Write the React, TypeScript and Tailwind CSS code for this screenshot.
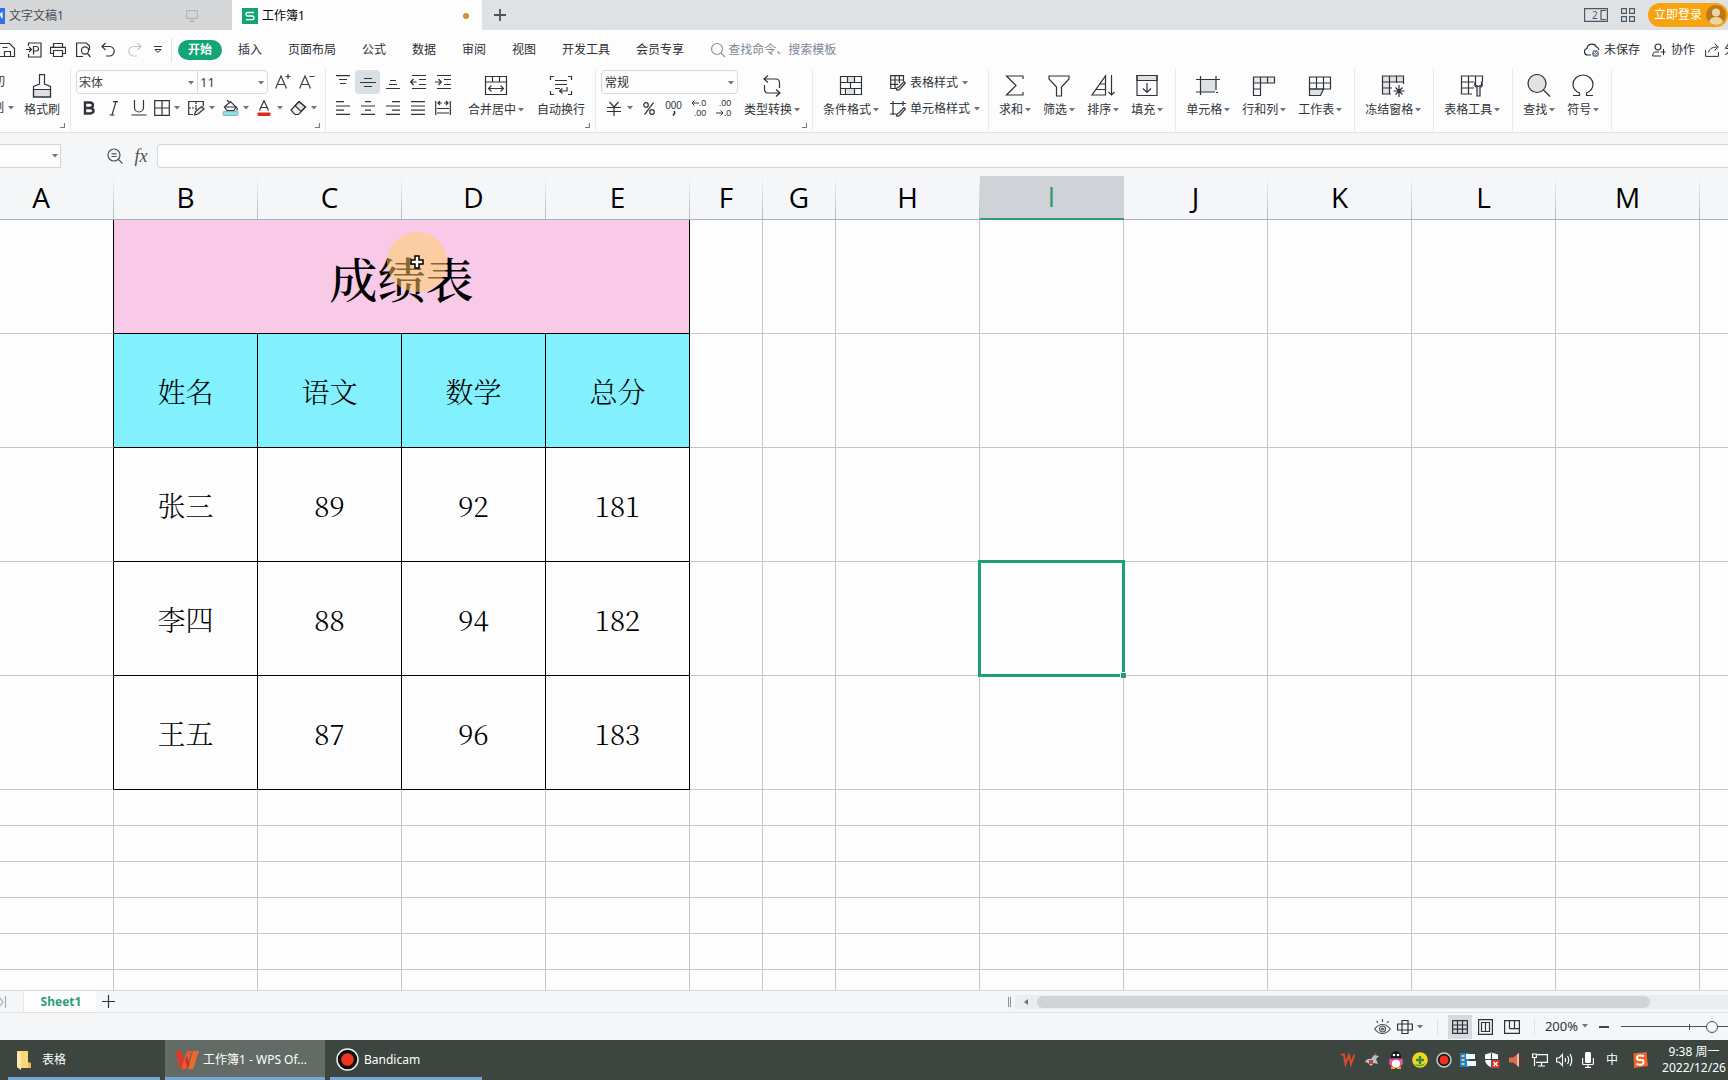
import type { ReactNode } from "react";
import clsx from "clsx";

const MENU = ["插入", "页面布局", "公式", "数据", "审阅", "视图", "开发工具", "会员专享"];

const COLUMNS = [
  { name: "A", width: "w-[114px]", label: "pr-8" },
  { name: "B", width: "w-36" },
  { name: "C", width: "w-36" },
  { name: "D", width: "w-36" },
  { name: "E", width: "w-36" },
  { name: "F", width: "w-[73px]" },
  { name: "G", width: "w-[73px]" },
  { name: "H", width: "w-36" },
  { name: "I", width: "w-36" },
  { name: "J", width: "w-36" },
  { name: "K", width: "w-36" },
  { name: "L", width: "w-36" },
  { name: "M", width: "w-36" },
  { name: "", width: "" },
];

const SUBJECTS = ["姓名", "语文", "数学", "总分"];

const SCORES = [
  ["张三", "89", "92", "181"],
  ["李四", "88", "94", "182"],
  ["王五", "87", "96", "183"],
];

const TAIL = ["F", "G", "H", "I", "J", "K", "L", "M", "N"];

function Svg({ w = 16, h = w, className, children }: { w?: number; h?: number; className?: string; children: ReactNode }) {
  return (
    <svg
      width={w}
      height={h}
      viewBox={`0 0 ${w} ${h}`}
      fill="none"
      stroke="currentColor"
      strokeWidth="1.2"
      className={clsx("shrink-0", className)}
      aria-hidden="true"
    >
      {children}
    </svg>
  );
}

function Caret() {
  return (
    <Svg w={6} h={4} className="text-[#70757b]">
      <path d="M0 0h6L3 3.6z" fill="currentColor" stroke="none" />
    </Svg>
  );
}

function Corner() {
  return (
    <Svg w={5} className="absolute right-[5px] bottom-1 text-[#777c82]">
      <path d="M4.5 0v4.5H0" />
    </Svg>
  );
}

function Group({ className, corner, children }: { className?: string; corner?: boolean; children: ReactNode }) {
  return (
    <div className={clsx("relative flex shrink-0 border-r border-[#e9ebee]", className)}>
      {children}
      {corner && <Corner />}
    </div>
  );
}

function BigButton({ label, caret = true, children }: { label: string; caret?: boolean; children: ReactNode }) {
  return (
    <button type="button" className="flex shrink-0 flex-col items-center pt-1">
      <span className="flex h-7 items-center">
        <Svg w={24}>{children}</Svg>
      </span>
      <span className="flex h-5 items-center gap-0.5 whitespace-nowrap">
        {label}
        {caret && <Caret />}
      </span>
    </button>
  );
}

function Cell({ label, active, children }: { label: string; active?: boolean; children: ReactNode }) {
  return (
    <button
      type="button"
      aria-label={label}
      className={clsx("flex h-6 w-[25px] items-center justify-center", active && "rounded-sm bg-[#d9e0e3]")}
    >
      {children}
    </button>
  );
}

function SplitButton({ label, children }: { label: string; children: ReactNode }) {
  return (
    <button type="button" aria-label={label} className="flex h-6 w-[34px] items-center gap-1">
      {children}
      <Caret />
    </button>
  );
}

function TitleBar() {
  return (
    <div className="flex h-[30px] shrink-0 bg-[#dfe2e4]">
      <div className="flex w-58 items-center bg-[#d5d7d9] pt-0.5 text-[#4a4f55]">
        <Svg w={5} h={16} className="text-white">
          <path d="M0 0h5v16H0z" fill="#2f72e8" stroke="none" />
          <path d="M0 5l2 5V4" />
        </Svg>
        <span className="ml-1">文字文稿1</span>
        <Svg w={12} className="mr-[34px] ml-auto text-[#b4b7ba]">
          <path d="M.6.6h10.800v7.800H.6zM6 8.400v3M3 11.400h6" />
        </Svg>
      </div>
      <div className="flex w-[250px] items-center bg-[#fdfdfd] pt-0.5 pl-2.5 text-black">
        <Svg w={16}>
          <path d="M0 0h16v16H0z" fill="#11a573" stroke="none" />
          <path d="M12 4.500H5.500Q4 4.500 4 6.200T5.500 8h5q1.500 0 1.500 1.800t-1.500 1.800H4" stroke="#fff" strokeWidth="1.4" />
        </Svg>
        <span className="ml-1">工作簿1</span>
        <span className="mr-[13px] ml-auto size-1.5 rounded-full bg-[#d2952c]" />
      </div>
      <button type="button" aria-label="新建" className="ml-3 text-[#4a5262]">
        <Svg w={12}>
          <path d="M6 0v12M0 6h12" strokeWidth="1.8" />
        </Svg>
      </button>
      <div className="ml-auto flex items-center gap-[13px] text-[#4d5866]">
        <button type="button" aria-label="窗口">
          <Svg w={24} h={14}>
            <path d="M.6.6h22.800v12.800H.6zM22 2.500h-5v9h5" />
            <text x="8" y="11" fontSize="10" fill="currentColor" stroke="none">
              2
            </text>
          </Svg>
        </button>
        <button type="button" aria-label="应用">
          <Svg w={14}>
            <path d="M.6.6h4.800v4.800H.6zM8.600.6h4.800v4.800H8.600zM.6 8.600h4.800v4.800H.6zM8.600 8.600h4.800v4.800H8.600z" />
          </Svg>
        </button>
        <button type="button" className="flex h-6 items-center gap-1 rounded-full bg-[#f6a30f] pr-0.5 pl-1.5 text-white">
          立即登录
          <Svg w={20}>
            <circle cx="10" cy="10" r="10" fill="#b9791b" stroke="none" />
            <circle cx="10" cy="7.500" r="4" fill="#f0d3a4" stroke="none" />
            <path d="M3 17q1.500-5 7-5t7 5q-3 3-7 3t-7-3z" fill="#f0d3a4" stroke="none" />
          </Svg>
        </button>
      </div>
    </div>
  );
}

function QuickTools() {
  return (
    <div className="flex items-center text-[#2f343a]">
      <button type="button" aria-label="保存">
        <Svg w={16}>
          <path d="M0 1.500h9.500l5 5v8H0M4.500 14.500v-5h6v5M2.500 5.500h5" />
        </Svg>
      </button>
      <button type="button" aria-label="输出为PDF" className="ml-2.5">
        <Svg w={16}>
          <path d="M2.500 4V1h12.500v14H2.500v-3M0 7.500h5M3 5l2.500 2.500L3 10M7.500 12.500V4.500h3q2 .2 2 2.300t-2 2.200h-3" />
        </Svg>
      </button>
      <button type="button" aria-label="打印" className="ml-2">
        <Svg w={16}>
          <path d="M3.500 5V1.500h9V5M3.500 11.500h-3V5.300h15v6.200h-3M3.500 8.500h9v6h-9z" />
        </Svg>
      </button>
      <button type="button" aria-label="打印预览" className="ml-2.5">
        <Svg w={16}>
          <path d="M7 14.500H.6V1h9.900l3 3v4" />
          <circle cx="9" cy="8.500" r="3.600" />
          <path d="M11.500 11.500l3 3.500" />
        </Svg>
      </button>
      <button type="button" aria-label="撤销" className="ml-[9px]">
        <Svg w={15} h={16}>
          <path d="M4.500 1L1 4.500 4.500 8M1 4.500h7.500a4.700 4.700 0 010 9.500H5" />
        </Svg>
      </button>
      <button type="button" aria-label="恢复" className="ml-[11px] text-[#c3c6c9]">
        <Svg w={15} h={16}>
          <path d="M10.500 1L14 4.500 10.500 8M14 4.500H6.500a4.700 4.700 0 000 9.500H10" />
        </Svg>
      </button>
      <button type="button" aria-label="更多" className="ml-3">
        <Svg w={8} h={10}>
          <path d="M0 1.500h8M1 4.500l3 3 3-3z" strokeWidth="1" />
        </Svg>
      </button>
    </div>
  );
}

function MenuBar() {
  return (
    <div className="flex h-[38px] shrink-0 items-center pt-0.5">
      <QuickTools />
      <span className="ml-[9px] h-6 w-px bg-[#e2e4e7]" />
      <button type="button" className="ml-1.5 h-5 w-11 rounded-full bg-[#14a577] font-bold text-white">
        开始
      </button>
      <nav className="ml-4 flex gap-[26px] whitespace-nowrap">
        {MENU.map((item) => (
          <a key={item} href="#">
            {item}
          </a>
        ))}
      </nav>
      <label className="ml-[26px] flex items-center gap-0.5 text-[#8b94a0]">
        <Svg w={16}>
          <circle cx="7" cy="7" r="5.500" />
          <path d="M11 11l4 4" />
        </Svg>
        <input
          aria-label="搜索"
          placeholder="查找命令、搜索模板"
          className="w-32 bg-transparent outline-none placeholder:text-[#7c8896]"
        />
      </label>
      <div className="-mr-5 ml-auto flex items-center whitespace-nowrap">
        <button type="button" className="flex items-center gap-1">
          <Svg w={16}>
            <path d="M7 13H4A3.300 3.300 0 013 6.500 5 5 0 0112.500 5 3.500 3.500 0 0115 8" />
            <circle cx="11.500" cy="11.500" r="3.500" fill="#7887a0" stroke="none" />
            <path d="M10 10l3 3m0-3l-3 3" stroke="#fff" strokeWidth=".8" />
          </Svg>
          未保存
        </button>
        <button type="button" className="ml-3 flex items-center gap-[5px]">
          <Svg w={14}>
            <circle cx="6" cy="4" r="3" />
            <path d="M7 9H3Q.6 9.500.6 13H9M11.500 6v6M8.500 9h5" strokeWidth="1" />
          </Svg>
          协作
        </button>
        <button type="button" className="ml-2.5 flex items-center gap-1">
          <Svg w={15} h={14}>
            <path d="M.6 7v6.400h12.800V9M3.500 9.500Q4.500 4 12 4M9.500.6L13.300 4 9.500 7.500" strokeWidth="1" />
          </Svg>
          分享
        </button>
      </div>
    </div>
  );
}

function FontGroup() {
  return (
    <Group corner className="flex-col gap-0.5 pt-0.5 pl-[5px]">
      <div className="flex h-6 items-center text-[#3a3f45]">
        <div className="flex h-6 w-48 rounded-sm border border-[#d6d9dc]">
          <label className="flex flex-1 items-center border-r border-[#d6d9dc] pt-0.5 pr-[3px] pl-0.5">
            <select aria-label="字体" className="flex-1 appearance-none outline-none">
              <option>宋体</option>
            </select>
            <Caret />
          </label>
          <label className="flex w-[69px] items-center pt-0.5 pr-[3px] pl-0.5">
            <select aria-label="字号" className="flex-1 appearance-none text-[13px] outline-none">
              <option>11</option>
            </select>
            <Caret />
          </label>
        </div>
        <button type="button" aria-label="增大字号" className="ml-[7px]">
          <Svg w={16}>
            <path d="M.6 14.500L6 2l5.500 12.500M2.500 10.500h7M13 0v5M10.500 2.500h5" />
          </Svg>
        </button>
        <button type="button" aria-label="减小字号" className="ml-2">
          <Svg w={16}>
            <path d="M.6 14.500L6 2l5.500 12.500M2.500 10.500h7M10.500 2.500h5" />
          </Svg>
        </button>
      </div>
      <div className="flex h-6">
        <Cell label="加粗">
          <Svg w={12} h={14}>
            <path d="M2 1.500h4.500Q10 1.700 10 4.200T6.500 7H2zM2 7h5q3.500.2 3.500 2.800T7 12.500H2z" strokeWidth="2.400" />
          </Svg>
        </Cell>
        <Cell label="倾斜">
          <Svg w={10} h={15}>
            <path d="M4 .6h5M.6 14h5M7 .6L3 14" />
          </Svg>
        </Cell>
        <Cell label="下划线">
          <Svg w={16}>
            <path d="M3.500 0v7.500a4.500 4.500 0 009 0V0M.5 15h15" />
          </Svg>
        </Cell>
        <div className="ml-[3px] flex pr-px">
          <SplitButton label="边框">
            <Svg w={16}>
              <path d="M.7.7h14.600v14.600H.7zM8 .7v14.600M.7 8h14.600" />
            </Svg>
          </SplitButton>
          <SplitButton label="绘图边框">
            <Svg w={17} h={16}>
              <path d="M5 14.500H.7V1.500h14.600v5" />
              <path d="M8 2v8M1 8h9" strokeDasharray="2 1" />
              <path d="M6.500 15l1-3.500 6-5 2.500 2.500-6 5z" fill="#e4e6e8" />
            </Svg>
          </SplitButton>
          <SplitButton label="填充颜色">
            <Svg w={17} h={16}>
              <path d="M2.500 7l6-5.500 5.500 5.500-2 3.500h-7z" />
              <path d="M2.500 7h11.500M5 0l3 3M14 7q2.500 2 .5 3.500" />
              <rect x="1" y="11.500" width="15" height="4" rx="1" fill="#8ee0e6" stroke="#6aaeb4" strokeWidth=".8" />
            </Svg>
          </SplitButton>
          <SplitButton label="字体颜色">
            <Svg w={17} h={16}>
              <path d="M3.500 10.500L8 .6l4.500 9.900M5 7.500h6" />
              <rect x="1.500" y="12.500" width="13" height="3.500" rx="1" fill="#d92a1c" stroke="none" />
            </Svg>
          </SplitButton>
          <SplitButton label="清除">
            <Svg w={17} h={16}>
              <path d="M5 5.800L9 1.500l6.500 5.500-4.500 4.500z" fill="#dfe1e3" />
              <path d="M1 10l8-8.500 6.500 5.500L8.500 14.500H5z" />
            </Svg>
          </SplitButton>
        </div>
      </div>
    </Group>
  );
}

function AlignGroup() {
  return (
    <Group corner className="gap-[13px] pr-2.5 pl-1">
      <div className="grid grid-cols-5 content-start gap-y-0.5 pt-0.5">
        <Cell label="顶端对齐">
          <Svg w={14}>
            <path d="M0 0.700h14M3 4.500h8M4 8.500h6" />
          </Svg>
        </Cell>
        <Cell label="垂直居中" active>
          <Svg w={16}>
            <path d="M4 4.500h8M0 8.500h16M4 12.500h8" />
          </Svg>
        </Cell>
        <Cell label="底端对齐">
          <Svg w={14} h={16}>
            <path d="M4 6.500h6M3 10.500h8M0 14.500h14" />
          </Svg>
        </Cell>
        <Cell label="减少缩进">
          <Svg w={16}>
            <path d="M2 1.500h14M9 5.500h7M9 10.500h7M2 14.500h14M.7 8h6M3.500 5L.7 8l2.800 3" />
          </Svg>
        </Cell>
        <Cell label="增加缩进">
          <Svg w={16}>
            <path d="M2 1.500h14M9 5.500h7M9 10.500h7M2 14.500h14M0 8h6M3.500 5l2.800 3-2.800 3" />
          </Svg>
        </Cell>
        <Cell label="左对齐">
          <Svg w={14}>
            <path d="M0 .7h8M0 5h14M0 9.200h8M0 13.400h14" />
          </Svg>
        </Cell>
        <Cell label="水平居中">
          <Svg w={14}>
            <path d="M4 .7h6M0 5h14M4 9.200h6M0 13.400h14" />
          </Svg>
        </Cell>
        <Cell label="右对齐">
          <Svg w={14}>
            <path d="M6 .7h8M0 5h14M6 9.200h8M0 13.400h14" />
          </Svg>
        </Cell>
        <Cell label="两端对齐">
          <Svg w={14}>
            <path d="M0 .7h14M0 5h14M0 9.200h14M0 13.400h14" />
          </Svg>
        </Cell>
        <Cell label="分散对齐">
          <Svg w={16}>
            <path d="M.7 1v14M15.300 1v14M3 3h4M9 3h4M5 1L3 3l2 2M11 1l2 2-2 2M2 8.500h12M2 13h12" />
          </Svg>
        </Cell>
      </div>
      <BigButton label="合并居中">
        <path d="M1.500 2.500h21v18h-21zM1.500 8h21M8.500 2.500V8M15.500 2.500V8M4.500 14.500h15M7.500 11.500l-3 3 3 3M16.500 11.500l3 3-3 3" />
      </BigButton>
      <BigButton label="自动换行" caret={false}>
        <path d="M5 2.500H1.500V6M19 2.500h3.500V6M5 20.500H1.500V17M19 20.500h3.500V17M6 6.500h12M6 10.500h12M6 14.500h5M18 13v4h-7M13.500 14.500L10.500 17l3 2.500" />
      </BigButton>
    </Group>
  );
}

const DIGITS = "flex flex-col items-end font-['Liberation_Sans',sans-serif] text-[9px] leading-[10px]";

function NumberGroup() {
  return (
    <Group corner className="gap-1.5 pr-3 pl-[5px]">
      <div className="flex flex-col gap-0.5 pt-0.5">
        <label className="flex h-6 w-[137px] items-center rounded-sm border border-[#d6d9dc] pt-0.5 pr-[3px] pl-[3px]">
          <select aria-label="数字格式" className="flex-1 appearance-none outline-none">
            <option>常规</option>
          </select>
          <Caret />
        </label>
        <div className="flex h-6">
          <button type="button" aria-label="货币" className="flex w-[35px] items-center gap-1.5 pl-1.5">
            <Svg w={14} h={15}>
              <path d="M2.500 1L7 6l4.500-5M7 6v9M0 6.500h14M0 10.500h14" />
            </Svg>
            <Caret />
          </button>
          <Cell label="百分比">
            <Svg w={12} h={13}>
              <circle cx="3" cy="3" r="2.300" />
              <circle cx="9" cy="10" r="2.300" />
              <path d="M10.500.6l-9 12" />
            </Svg>
          </Cell>
          <Cell label="千位分隔">
            <span className="flex flex-col items-center font-['Liberation_Sans',sans-serif] text-[10px] leading-[10px]">
              000
              <Svg w={4} h={5}>
                <path d="M2.500 0v2.500L1 4.500" strokeWidth="1.600" />
              </Svg>
            </span>
          </Cell>
          <Cell label="增加小数位">
            <span className={DIGITS}>
              <span className="flex items-center">
                <Svg w={8} h={6}>
                  <path d="M1 3h7M3.500.5L1 3l2.500 2.500" strokeWidth="1" />
                </Svg>
                .0
              </span>
              <span>.00</span>
            </span>
          </Cell>
          <Cell label="减少小数位">
            <span className={DIGITS}>
              <span>.00</span>
              <span className="flex items-center">
                <Svg w={8} h={6}>
                  <path d="M0 3h7M4.500.5L7 3 4.500 5.500" strokeWidth="1" />
                </Svg>
                .0
              </span>
            </span>
          </Cell>
        </div>
      </div>
      <BigButton label="类型转换">
        <path d="M8 1.500L4 5l4 3.500M4 5h12q3.500 0 3.500 4v5M16 15.500l4 3.500-4 3.500M20 19H8q-3.500 0-3.500-4v-4" />
      </BigButton>
    </Group>
  );
}

function Ribbon() {
  return (
    <div className="flex h-[65px] shrink-0 border-b border-[#dfe1e4] text-[#2f343a]">
      <Group corner className="gap-2.5 pr-2.5">
        <div className="flex w-3.5 flex-col gap-0.5 pt-0.5">
          <button type="button" aria-label="剪切" className="flex h-6 w-[5px] items-center justify-end overflow-hidden">
            切
          </button>
          <button type="button" aria-label="复制" className="flex h-6 items-center gap-1">
            <span className="flex w-[5px] justify-end overflow-hidden">制</span>
            <Caret />
          </button>
        </div>
        <BigButton label="格式刷" caret={false}>
          <path d="M3.500 15.500h17V23h-17z" fill="#dfe1e5" />
          <path d="M9.500.6h5v9.400l6 2.500V23h-17V12.500l6-2.500z" />
        </BigButton>
      </Group>
      <FontGroup />
      <AlignGroup />
      <NumberGroup />
      <Group className="gap-[11px] pr-2 pl-2.5">
        <BigButton label="条件格式">
          <path d="M8 2.500h7v6H8zM8 14.500h7v6H8z" fill="#dfe1e5" stroke="none" />
          <path d="M1.500 2.500h21v18h-21zM1.500 8.500h21M1.500 14.500h21M8.500 2.500v6M15.500 2.500v6M11.500 8.500v6M6.500 14.500v6M15.500 14.500v6" />
        </BigButton>
        <div className="flex flex-col gap-0.5 pt-0.5 whitespace-nowrap">
          <button type="button" className="flex h-6 items-center gap-1 pt-0.5">
            <Svg w={16}>
              <path d="M6 13.500H.7V.7h12.800V6M.7 5h12.800M.7 9.300H8M5 .7v12.800M9.300.7V8" />
              <path d="M6.500 15q0-3 2.500-3l5-5.500 1.500 1.500-5 5.500q-1 2-4 1.500z" fill="#e4e6e8" />
            </Svg>
            <span>表格样式</span>
            <Caret />
          </button>
          <button type="button" className="flex h-6 items-center gap-1 pt-0.5">
            <Svg w={16}>
              <path d="M3 0v14M0 2.500h16M13 0v5M0 13h6" />
              <path d="M6.500 15q0-3 2.500-3l5-5.500 1.500 1.500-5 5.500q-1 2-4 1.500z" fill="#e4e6e8" />
            </Svg>
            <span>单元格样式</span>
            <Caret />
          </button>
        </div>
      </Group>
      <Group className="gap-3 pr-3 pl-2.5">
        <BigButton label="求和">
          <path d="M20 5V2H3.500l9.500 9.500L3.500 21H20v-3" />
        </BigButton>
        <BigButton label="筛选">
          <path d="M2 2h20v3l-7.500 8v9h-5v-9L2 5z" />
        </BigButton>
        <BigButton label="排序">
          <path d="M14.500 21V2L1 21zM14.500 15.500H5M14.500 10H9M20.500 1v20M17.500 18l3 3 3-3" />
        </BigButton>
        <BigButton label="填充">
          <path d="M2 1.500h20v5H2z" fill="#dfe1e5" />
          <path d="M2 1.500h20v20H2zM12 9v9M8 14.500l4 4 4-4" />
        </BigButton>
      </Group>
      <Group className="gap-3 pr-3 pl-2.5">
        <BigButton label="单元格">
          <path d="M4.500 5h15v13h-15z" fill="#dfe1e5" stroke="none" />
          <path d="M4.500 2v19M0 5.500h24M0 18h19M20 2v14M20 18.500h2" />
        </BigButton>
        <BigButton label="行和列">
          <path d="M1.500 3h21v6h-21z" fill="#e6e8ea" stroke="none" />
          <path d="M1.500 3h21v6h-14v12.500h-7zM8.500 3v6M15.500 3v6M1.500 9h7M1.500 15h7" />
        </BigButton>
        <BigButton label="工作表">
          <path d="M1.500 15h14l-3 6.500h-11z" fill="#dfe1e5" />
          <path d="M1.500 3h21v12h-21zM1.500 9h21M8.500 3v12M15.500 3v12" />
        </BigButton>
      </Group>
      <Group className="pr-3 pl-2.5">
        <BigButton label="冻结窗格">
          <path d="M1.500 2h21v6h-21zM1.500 8h7v12h-7z" fill="#e1e3e5" stroke="none" />
          <path d="M10 20H1.500V2h21v8M1.500 8h21M1.500 14H11M8.500 2v18M15.500 2v7M18 11v12M12.500 17h11M14.500 13.500l7 7M21.500 13.500l-7 7" />
        </BigButton>
      </Group>
      <Group className="pr-3 pl-2.5">
        <BigButton label="表格工具">
          <path d="M12 20H1.500V2h21v6M1.500 8H14M1.500 14H14M8.500 2v18M15.500 2v6" />
          <path d="M15.500 7.500Q13.500 12 17 13.500V22h3v-8.500q3.500-1.500 1.500-6v4h-1.500l-1 1h-1l-1-1h-1.500z" fill="#e6e8ea" />
        </BigButton>
      </Group>
      <Group className="gap-3 pr-3 pl-2.5">
        <BigButton label="查找">
          <circle cx="10" cy="9.500" r="9" fill="#e0e2e4" />
          <path d="M16.500 16L23 22.500" />
        </BigButton>
        <BigButton label="符号">
          <path d="M2 21.500h6.500v-2.500Q2 16 2 10.500a10 9.500 0 0120 0Q22 16 15.500 19v2.500H22" />
        </BigButton>
      </Group>
    </div>
  );
}

function FormulaBar() {
  return (
    <div className="flex h-[43px] shrink-0 items-center bg-[#f4f6f8] pt-0.5 text-[#4c5157]">
      <label className="flex h-6 w-[61px] items-center border border-l-0 border-[#d3d7db] bg-[#fdfdfd] pr-0.5">
        <input aria-label="名称框" className="min-w-0 flex-1 bg-transparent outline-none" />
        <Caret />
      </label>
      <button type="button" aria-label="浏览公式结果" className="ml-[46px]">
        <Svg w={16}>
          <circle cx="7" cy="7" r="6" />
          <path d="M11.500 11.500l4 4M4.500 5.800h5M4.500 8.500h5" />
        </Svg>
      </button>
      <button
        type="button"
        aria-label="插入函数"
        className="ml-2.5 w-4 font-['Liberation_Serif',serif] text-lg leading-6 italic"
      >
        fx
      </button>
      <input
        aria-label="编辑栏"
        className="ml-2 h-6 min-w-0 flex-1 rounded-l-sm border border-r-0 border-[#d3d7db] bg-[#fdfdfd] px-1 outline-none"
      />
    </div>
  );
}

const LINE = "border-r border-b border-[#c3c7cc]";
const INK = "border-r border-b border-black";

function EmptyCells({ columns, selected }: { columns: string[]; selected?: string }) {
  return columns.map((name) => (
    <td key={name} className={clsx("relative p-0", name === "N" ? "border-b border-[#c3c7cc]" : LINE)}>
      {name === selected && (
        <span className="absolute -inset-0.5 z-10 border-3 border-[#1d9f76]">
          <span className="absolute -right-1 -bottom-1 size-1.5 border-t border-l border-white bg-[#1d9f76]" />
        </span>
      )}
    </td>
  ));
}

function Pointer() {
  return (
    <span className="absolute top-3 left-[273px] flex size-15 items-center justify-center rounded-full bg-[#ffd060]/50">
      <Svg w={14}>
        <path d="M5 1h4v4h4v4H9v4H5V9H1V5h4z" fill="#fff" stroke="#000" strokeWidth="1.500" />
      </Svg>
    </span>
  );
}

function Sheet() {
  return (
    <div className="min-h-0 flex-1 overflow-hidden bg-[#fdfdfd]">
      <table className="w-full table-fixed border-separate border-spacing-0 font-['Noto_Serif_CJK_SC','Noto_Sans_CJK_SC',serif] text-black">
        <colgroup>
          {COLUMNS.map((col) => (
            <col key={col.name} className={col.width} />
          ))}
        </colgroup>
        <thead>
          <tr className="h-11 font-['Open_Sans',sans-serif] text-[28px] leading-9">
            {COLUMNS.map((col) => (
              <th
                key={col.name}
                scope="col"
                className={clsx(
                  "border-b pt-0 pb-0.5 pl-0 font-normal",
                  col.label ?? "pr-px",
                  col.name === "I"
                    ? "border-b-2 border-[#2f9c78] bg-[#cfd3d7] text-[#2f9c78]"
                    : "border-[#aab2bd] bg-[#f4f6f8]",
                  col.name !== "I" &&
                    col.name !== "" &&
                    "bg-[linear-gradient(to_bottom,#f4f6f8,#b3b9c2)] bg-[length:1px_100%] bg-right bg-no-repeat",
                )}
              >
                {col.name}
              </th>
            ))}
          </tr>
        </thead>
        <tbody className="text-center text-[28px] leading-9">
          <tr className="h-[114px]">
            <td className="border-r border-b border-r-black border-b-[#c3c7cc]" />
            <td colSpan={4} className={clsx("relative bg-[#f8cae7] px-0 pt-0.5 pb-0 text-5xl font-medium", INK)}>
              成绩表
              <Pointer />
            </td>
            <EmptyCells columns={TAIL} />
          </tr>
          <tr className="h-[114px]">
            <td className="border-r border-b border-r-black border-b-[#c3c7cc]" />
            {SUBJECTS.map((text) => (
              <td key={text} className={clsx("bg-[#83f0fd] p-0 font-light", INK)}>
                {text}
              </td>
            ))}
            <EmptyCells columns={TAIL} />
          </tr>
          {SCORES.map((row) => (
            <tr key={row[0]} className="h-[114px]">
              <td className="border-r border-b border-r-black border-b-[#c3c7cc]" />
              {row.map((text) => (
                <td key={text} className={clsx("p-0 font-light", INK)}>
                  {text}
                </td>
              ))}
              <EmptyCells columns={TAIL} selected={row[0] === "李四" ? "I" : undefined} />
            </tr>
          ))}
          {[6, 7, 8, 9, 10, 11].map((n) => (
            <tr key={n} className="h-9">
              <EmptyCells columns={["A", "B", "C", "D", "E", ...TAIL]} />
            </tr>
          ))}
        </tbody>
      </table>
    </div>
  );
}

function SheetTabs() {
  return (
    <div className="flex h-[22px] shrink-0 border-t border-[#d8dce0] bg-[#f4f6f8]">
      <button type="button" aria-label="最后一个工作表" className="w-6 border-r border-[#e3e6e9] text-[#a8acb1]">
        <Svg w={7} h={12}>
          <path d="M0 2l3 4-3 4M5.500 0v12" />
        </Svg>
      </button>
      <button type="button" className="w-18 bg-[#fdfdfd] pl-0.5 font-bold text-[#2f9c78]">
        Sheet1
      </button>
      <button type="button" aria-label="新建工作表" className="ml-1.5 text-[#2f343a]">
        <Svg w={13}>
          <path d="M6.500 0v13M0 6.500h13" />
        </Svg>
      </button>
      <div className="ml-auto flex w-5/12 items-center gap-1">
        <span className="h-2.5 w-[3px] border-x border-[#8a8f95]" />
        <div className="flex h-3.5 flex-1 items-center bg-[#e9edf0]">
          <button type="button" aria-label="向左滚动" className="flex w-[22px] justify-center">
            <Svg w={4} h={6} className="text-[#70757b]">
              <path d="M4 0v6L0 3z" fill="currentColor" stroke="none" />
            </Svg>
          </button>
          <span className="h-3 w-[86%] rounded-full bg-[#cfd4d9]" />
        </div>
      </div>
    </div>
  );
}

function StatusBar() {
  return (
    <div className="flex h-7 shrink-0 items-center justify-end border-t border-[#dfe2e5] bg-[#f4f6f8] text-[#2f343a]">
      <button type="button" aria-label="护眼模式">
        <Svg w={17} h={16} className="text-[#4d5359]">
          <path d="M.6 10Q4 5.500 8.500 5.500T16.400 10Q13 14.500 8.500 14.500T.6 10zM8.500 0v3M2.500 2l1.500 2M14.500 2L13 4" />
          <circle cx="8.500" cy="10" r="3" />
          <circle cx="8.500" cy="10" r="1" />
        </Svg>
      </button>
      <button type="button" aria-label="阅读模式" className="ml-1.5 flex items-center gap-1">
        <Svg w={16}>
          <path d="M5 1.500h6v13H5zM.6 5h14.800v6H.6zM5 5v6M11 5v6" />
        </Svg>
        <Caret />
      </button>
      <span className="ml-3.5 h-4 w-px bg-[#dfe2e5]" />
      <button type="button" aria-label="普通视图" className="ml-2.5 flex size-6 items-center justify-center bg-[#d6dade]">
        <Svg w={16} h={14}>
          <path d="M.6.6h14.800v12.800H.6zM.6 5h14.800M.6 9.200h14.800M5.500.6v12.800M10.500.6v12.800" />
        </Svg>
      </button>
      <button type="button" aria-label="分页预览" className="ml-1.5">
        <Svg w={15} h={16}>
          <path d="M.6.6h13.800v14.800H.6zM3.500 3.500h8v9h-8zM7.500 3.500v9" />
        </Svg>
      </button>
      <button type="button" aria-label="页面布局" className="ml-[11px]">
        <Svg w={16} h={14}>
          <path d="M.6.6h14.800v12.800H.6zM5.500.6v8M10.500.6v8M5.500 8.600h10" />
        </Svg>
      </button>
      <span className="ml-3.5 h-4 w-px bg-[#dfe2e5]" />
      <button type="button" className="ml-2.5 flex items-center gap-1 text-[13px]">
        200%
        <Caret />
      </button>
      <button type="button" aria-label="缩小" className="ml-[11px] h-0.5 w-2.5 bg-[#3f444a]" />
      <div className="relative ml-3 flex w-[107px] items-center">
        <input
          type="range"
          aria-label="显示比例"
          min={10}
          max={400}
          defaultValue={358}
          className="h-px w-full appearance-none bg-[#4d5359] [&::-webkit-slider-thumb]:size-3 [&::-webkit-slider-thumb]:appearance-none [&::-webkit-slider-thumb]:rounded-full [&::-webkit-slider-thumb]:border [&::-webkit-slider-thumb]:border-[#4d5359] [&::-webkit-slider-thumb]:bg-[#f4f6f8]"
        />
        <span className="absolute right-[38px] h-1.5 w-px bg-[#4d5359]" />
      </div>
    </div>
  );
}

function TaskButton({ label, className, children }: { label: string; className: string; children: ReactNode }) {
  return (
    <button
      type="button"
      className={clsx("flex items-center border-b-3 border-[#74a9d3] pt-0.5 whitespace-nowrap", className)}
    >
      {children}
      {label}
    </button>
  );
}

function Tray() {
  return (
    <div className="flex items-center">
      <span className="grid w-6 place-items-center">
        <Svg w={16} h={14} className="text-[#dd4a2b]">
          <path d="M1 1.500h3L5.500 11 9 2l2 9 3.500-9.500" strokeWidth="2" />
        </Svg>
      </span>
      <span className="grid w-6 place-items-center">
        <Svg w={16}>
          <path d="M1 10q2-4 6-3l3-4 5 1-3 3 2 5-4-1-3 3-3-3z" fill="#b9bfc0" stroke="none" />
          <path d="M5 8h4v4H5z" fill="#c9403a" stroke="none" />
          <path d="M11 1l1 2" stroke="#c9403a" />
        </Svg>
      </span>
      <span className="grid w-6 place-items-center">
        <Svg w={16} h={18}>
          <ellipse cx="8" cy="11" rx="7" ry="6" fill="#e857a0" stroke="none" />
          <ellipse cx="8" cy="5.500" rx="5" ry="5" fill="#111" stroke="none" />
          <ellipse cx="8" cy="12.500" rx="4" ry="4" fill="#fff" stroke="none" />
          <circle cx="6" cy="4" r="1.300" fill="#fff" stroke="none" />
          <circle cx="10" cy="4" r="1.300" fill="#fff" stroke="none" />
          <path d="M4 8h8" stroke="#e857a0" strokeWidth="1.500" />
          <path d="M3 17h4M9 17h4" stroke="#f3a51c" strokeWidth="2" />
        </Svg>
      </span>
      <span className="grid w-6 place-items-center">
        <Svg w={16}>
          <circle cx="8" cy="8" r="7.800" fill="#f2d51e" stroke="none" />
          <path d="M2 12a7.800 7.800 0 0012-1Q8 14 2 12z" fill="#3ea53a" stroke="none" />
          <path d="M8 4v8M4 8h8" stroke="#2f8f37" strokeWidth="2.400" />
        </Svg>
      </span>
      <span className="grid w-6 place-items-center">
        <Svg w={16}>
          <circle cx="8" cy="8" r="7" fill="#1a1a1a" stroke="#c9cccc" strokeWidth="1.500" />
          <circle cx="8" cy="8" r="4.500" fill="#ee2f26" stroke="none" />
        </Svg>
      </span>
      <span className="grid w-6 place-items-center">
        <Svg w={16}>
          <path d="M0 1h9v14H0z" fill="#1d83dc" stroke="none" />
          <path d="M6 2h9v5H6zM7 9h9v5H7z" fill="#f1f6fa" stroke="none" />
          <path d="M1.500 4h3M1.500 8h3M1.500 12h3" stroke="#f4d13b" strokeWidth="2" />
        </Svg>
      </span>
      <span className="grid w-6 place-items-center">
        <Svg w={16}>
          <path d="M7.500.5l6.500 2v5q0 5-6.500 8-6.500-3-6.500-8v-5z" fill="#fff" stroke="none" />
          <path d="M7.500 1v14M1 7.500h13" stroke="#3c463f" />
          <path d="M7.500 8h8v8h-8z" fill="#d8352c" stroke="none" />
          <path d="M9.500 10l4 4m0-4l-4 4" stroke="#fff" strokeWidth="1.400" />
        </Svg>
      </span>
      <span className="grid w-6 place-items-center">
        <Svg w={16}>
          <path d="M1 5.500h4L11 1v14l-6-4.500H1z" fill="#dd6b4d" stroke="none" />
          <path d="M9 2.500l2-1.500v14l-2-1.500z" fill="#f0b7a2" stroke="none" />
          <path d="M13 4q2.500 4 0 8" stroke="#6b3a2c" />
        </Svg>
      </span>
      <span className="grid w-6 place-items-center">
        <Svg w={16} h={14}>
          <path d="M5 1.600h10.400v7.800H4M9.500 9.400v3M6 13h7M.6 1h3.800v3.500H.6zM2.500 4.500V13" />
        </Svg>
      </span>
      <span className="grid w-6 place-items-center">
        <Svg w={17} h={14}>
          <path d="M.6 5h2.500L6.500 1.500v11L3.100 9H.6zM9 5q1.200 2 0 4M11.500 3q2.500 4 0 8M14 1q3.500 6 0 12" />
        </Svg>
      </span>
      <span className="grid w-6 place-items-center">
        <Svg w={12} h={16}>
          <rect x="3" y="0" width="6" height="11" rx="1.500" fill="#fff" stroke="none" />
          <path d="M.6 6v5.500q0 1 1 1h8.800q1 0 1-1V6M6 12.500V15M3 15.400h6" />
        </Svg>
      </span>
      <span className="w-6 text-center">中</span>
      <span className="grid w-8 place-items-center">
        <Svg w={16}>
          <path d="M1.500 1.500l13-1.500 1.500 14-14 2z" fill="#f0672b" stroke="none" />
          <path d="M12 4Q5 2.500 5 5.500T8.500 8t3 2.700-7 1.300" stroke="#fff" strokeWidth="2" />
        </Svg>
      </span>
    </div>
  );
}

function Taskbar() {
  return (
    <div className="flex h-10 shrink-0 bg-[#3c453f] text-white">
      <TaskButton label="表格" className="ml-2 w-38 gap-2.5 pl-2">
        <Svg w={16} h={20}>
          <path d="M1 1h11v17H3l-2-1z" fill="#f7d777" stroke="none" />
          <path d="M1 1l4 2v17l-4-3z" fill="#fbeaa9" stroke="none" />
          <path d="M12 12l3 1v5h-3z" fill="#e9b94a" stroke="none" />
        </Svg>
      </TaskButton>
      <TaskButton label="工作簿1 - WPS Of..." className="ml-[5px] w-40 gap-1 bg-[#636b66] pl-2.5">
        <Svg w={24} h={20}>
          <path d="M0 1h6l4 12-3 6H5z" fill="#d93a2b" stroke="none" />
          <path d="M6 19L12 1h5l-6 18z" fill="#f2562f" stroke="none" />
          <path d="M10 10l3 9h3l-4-13z" fill="#c8321f" stroke="none" />
          <path d="M13 19L18 1h6l-6 18z" fill="#ee6a2c" stroke="none" />
        </Svg>
      </TaskButton>
      <TaskButton label="Bandicam" className="ml-[5px] w-38 gap-[5px] pl-1.5">
        <Svg w={23}>
          <circle cx="11.500" cy="11.500" r="10.500" fill="#101010" stroke="#f4f4f4" strokeWidth="1.400" />
          <circle cx="11.500" cy="11.500" r="6.300" fill="#f0341f" stroke="none" />
        </Svg>
      </TaskButton>
      <div className="-mr-1 ml-auto flex">
        <Tray />
        <div className="flex w-[76px] flex-col justify-center text-center leading-4">
          <span>9:38 周一</span>
          <span>2022/12/26</span>
        </div>
      </div>
    </div>
  );
}

export default function App() {
  return (
    <div className="flex h-screen flex-col overflow-hidden bg-[#fdfdfd] font-['Noto_Sans','Noto_Sans_CJK_SC',sans-serif] text-xs text-[#2b3036]">
      <TitleBar />
      <MenuBar />
      <Ribbon />
      <FormulaBar />
      <Sheet />
      <SheetTabs />
      <StatusBar />
      <Taskbar />
    </div>
  );
}
